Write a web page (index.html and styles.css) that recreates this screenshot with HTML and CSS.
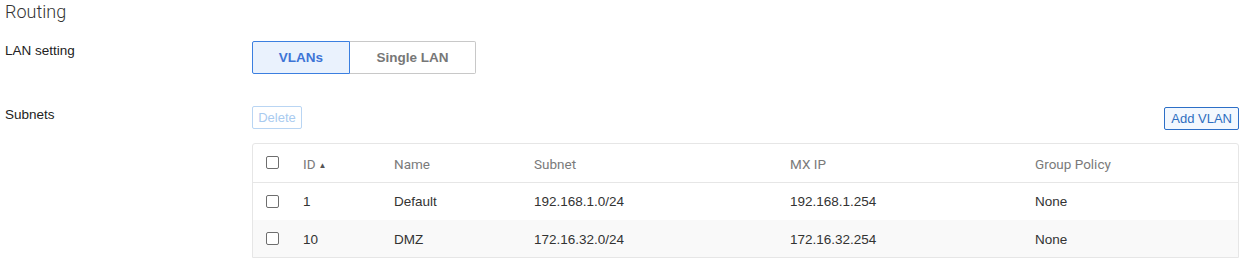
FILE: index.html
```html
<!DOCTYPE html>
<html>
<head>
<meta charset="utf-8">
<link rel="stylesheet" href="styles.css">
</head>
<body>
<div class="page">
  <h1 class="title">Routing</h1>
  <div class="row lan-row">
    <div class="label">LAN setting</div>
    <div class="segment">
      <button class="seg seg-active">VLANs</button>
      <button class="seg">Single LAN</button>
    </div>
  </div>
  <div class="row subnets-row">
    <div class="label">Subnets</div>
    <div class="subnets">
      <div class="toolbar">
        <button class="btn btn-disabled">Delete</button>
        <button class="btn btn-primary">Add VLAN</button>
      </div>
      <table class="grid">
        <colgroup>
          <col class="c-check"><col class="c-id"><col class="c-name"><col class="c-subnet"><col class="c-mx"><col>
        </colgroup>
        <thead>
          <tr>
            <th class="check"><span class="box"></span></th>
            <th>ID<span class="sort">▲</span></th>
            <th>Name</th>
            <th>Subnet</th>
            <th>MX IP</th>
            <th>Group Policy</th>
          </tr>
        </thead>
        <tbody>
          <tr>
            <td class="check"><span class="box"></span></td>
            <td>1</td>
            <td>Default</td>
            <td>192.168.1.0/24</td>
            <td>192.168.1.254</td>
            <td>None</td>
          </tr>
          <tr class="alt">
            <td class="check"><span class="box"></span></td>
            <td>10</td>
            <td>DMZ</td>
            <td>172.16.32.0/24</td>
            <td>172.16.32.254</td>
            <td>None</td>
          </tr>
        </tbody>
      </table>
    </div>
  </div>
</div>
</body>
</html>
```
FILE: styles.css
```css
* { box-sizing: border-box; }
html, body { margin: 0; padding: 0; background: #fff; }
body {
  font-family: "Liberation Sans", Arial, sans-serif;
  font-size: 13px;
  color: #333;
}
.page { padding: 0 10px 0 5px; width: 1250px; }
.title {
  margin: 0;
  font-family: Roboto, "Liberation Sans", sans-serif;
  font-weight: 300;
  font-size: 18px;
  line-height: 22px;
  color: #333;
  padding-top: 1px;
}
.row { display: flex; }
.label {
  width: 247px;
  flex: none;
  font-size: 13.5px;
  line-height: 16px;
  color: #222;
}
.lan-row { margin-top: 18px; }
.lan-row .label { padding-top: 2px; }
.segment { display: flex; }
.seg {
  font-family: "Liberation Sans", Arial, sans-serif;
  font-weight: bold;
  font-size: 13.5px;
  height: 33px;
  padding: 0;
  background: #fff;
  border: 1px solid #c8c8c8;
  color: #777;
  cursor: pointer;
}
.seg-active {
  width: 98px;
  background: #eaf2fd;
  border-color: #3b7fe0;
  color: #3d74d6;
  border-radius: 2px 0 0 2px;
}
.seg:not(.seg-active) {
  width: 126px;
  border-left: none;
  border-radius: 0 2px 2px 0;
}
.subnets-row { margin-top: 32px; }
.subnets-row .label { padding-top: 1px; }
.subnets { width: 987px; flex: none; }
.toolbar {
  display: flex;
  justify-content: space-between;
  align-items: flex-start;
}
.btn {
  font-family: "Liberation Sans", Arial, sans-serif;
  font-size: 13px;
  height: 23px;
  padding: 0 6px;
  border-radius: 2px;
  background: #fff;
  line-height: 21px;
}
.btn-disabled {
  width: 50px;
  padding: 0;
  border: 1px solid #b9d5f3;
  color: #a9cbf0;
}
.btn-primary {
  margin-top: 1px;
  border: 1px solid #2d6fc7;
  background: #f3f8fe;
  color: #2e6ec0;
}
.grid {
  margin-top: 13px;
  width: 987px;
  border-collapse: separate;
  border-spacing: 0;
  table-layout: fixed;
  border: 1px solid #e6e6e6;
  border-radius: 3px 3px 0 0;
}
.c-check { width: 50px; }
.c-id { width: 91px; }
.c-name { width: 140px; }
.c-subnet { width: 256px; }
.c-mx { width: 245px; }
th, td {
  text-align: left;
  padding: 0;
  vertical-align: middle;
  white-space: nowrap;
}
th {
  font-family: Roboto, "Liberation Sans", sans-serif;
  font-weight: 400;
  font-size: 13.5px;
  color: #7a7a7a;
  height: 39px;
  padding-top: 1px;
  border-bottom: 1px solid #e6e6e6;
}
td { height: 37px; color: #333; font-size: 13.5px; }
tr.alt td { background: #f9f9f9; padding-top: 1px; }
tr.alt td.check { padding-top: 0; }
.check { padding-left: 13px; }
.box {
  display: block;
  width: 13px;
  height: 13px;
  border: 1px solid #6e6e6e;
  border-radius: 2px;
  background: #fff;
}
th.check .box { margin-top: -2px; }
.sort {
  font-size: 8px;
  color: #555;
  margin-left: 3px;
  vertical-align: 1px;
}
```
